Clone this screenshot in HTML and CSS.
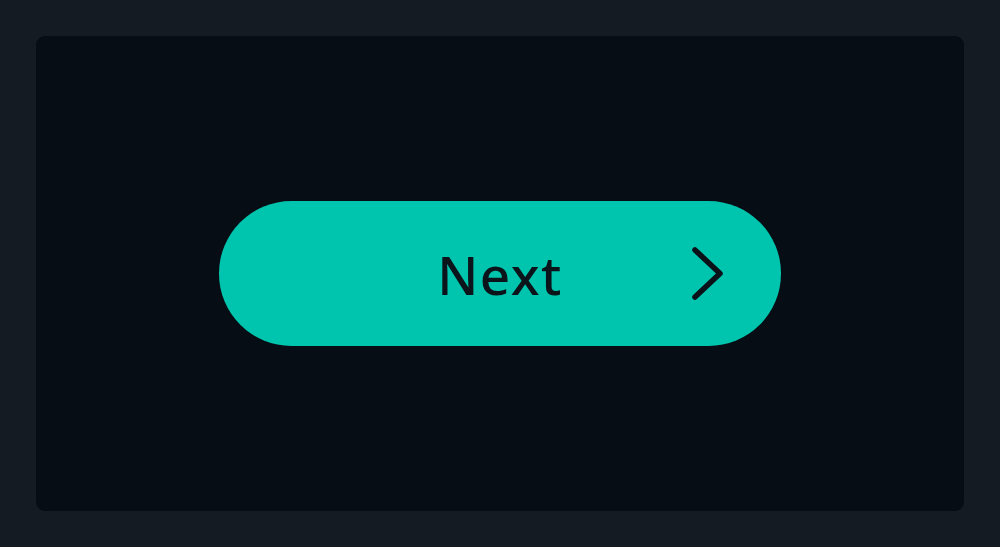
FILE: index.html
```html
<!DOCTYPE html>
<html lang="en">
<head>
    <meta charset="UTF-8">
    <meta name="viewport" content="width=device-width, initial-scale=1.0">
    <title>Next Button</title>
    <link rel="stylesheet" href="styles.css">
</head>
<body>
    <div class="panel">
        <button class="next-btn" type="button">
            <span class="label">Next</span>
            <svg class="chevron" width="34" height="53" viewBox="0 0 34 53">
                <polyline points="4,3 29,26.5 4,50" fill="none" stroke="#0a1118" stroke-width="5.5" stroke-linecap="round" stroke-linejoin="round"/>
            </svg>
        </button>
    </div>
</body>
</html>
```

FILE: styles.css
```css
body {
    margin: 0;
    padding: 36px;
    height: 547px;
    box-sizing: border-box;
    background: #141b23;
    font-family: 'Noto Sans', sans-serif;
}

.panel {
    height: 475px;
    background: #070d15;
    border-radius: 9px;
    display: flex;
    align-items: center;
    justify-content: center;
}

.next-btn {
    width: 562px;
    height: 145px;
    border: none;
    border-radius: 73px;
    background: #00c5ae;
    color: #0b141a;
    display: grid;
    grid-template-columns: 1fr auto 1fr;
    align-items: center;
    padding: 0;
    font-family: inherit;
    cursor: pointer;
}

.label {
    grid-column: 2;
    font-size: 53px;
    font-weight: 500;
    letter-spacing: 1.5px;
    line-height: 1;
    margin-top: 1px;
}

.chevron {
    grid-column: 3;
    justify-self: end;
    margin-right: 56px;
}
```
